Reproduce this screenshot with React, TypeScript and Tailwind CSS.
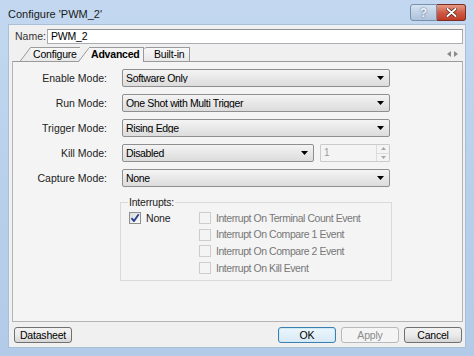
import React from "react";

// ---------- Small helpers ----------
const cx = (...list: (string | boolean | undefined)[]) => list.filter(Boolean).join(" ");

// ---------- Glyphs ----------
const DropArrow = () => (
  <svg width="7" height="4" viewBox="0 0 7 4" className="block shrink-0">
    <path d="M0 0h7L3.5 4z" fill="#000" />
  </svg>
);

const Slant = ({ fill }: { fill: string }) => (
  <svg width="11" height="14" viewBox="0 0 11 14" className="block shrink-0">
    <path d="M0 14L10.2 0.5H11V14z" fill={fill} />
    <path d="M0.3 14L10.5 0.5H11" stroke="#9a9a9a" fill="none" />
  </svg>
);

const CheckMark = () => (
  <svg width="10" height="10" viewBox="0 0 10 10" className="block">
    <path d="M1.5 5.2L4 8L8.7 1.3" stroke="#2a4390" strokeWidth="1.9" fill="none" strokeLinejoin="round" />
  </svg>
);

// ---------- UI atoms ----------
const Select = ({ value, className }: { value: string; className?: string }) => (
  <div
    className={cx(
      "h-[18px] flex items-center pl-[3px] pr-[5px] rounded-[2px] border border-[#8f8f8f] bg-gradient-to-b from-[#f4f4f4] to-[#dcdcdc]",
      className
    )}
  >
    <span className="flex-1 truncate text-[10.5px] tracking-[-0.35px]">{value}</span>
    <DropArrow />
  </div>
);

const Check = ({ checked, disabled }: { checked?: boolean; disabled?: boolean }) => (
  <span
    className={cx(
      "w-[12px] h-[12px] shrink-0 border flex items-center justify-center",
      disabled ? "border-[#cdcdcd] bg-[#f4f4f4]" : "border-[#8f8f8f] bg-gradient-to-br from-[#dadada] to-[#fdfdfd]"
    )}
  >
    {checked && <CheckMark />}
  </span>
);

const Button = ({ children, kind, className }: { children: React.ReactNode; kind?: "default" | "disabled"; className?: string }) => (
  <div
    className={cx(
      "h-[16px] w-[58px] flex items-center justify-center rounded-[3px] border",
      kind === "default" && "border-[#3c7fb1] bg-gradient-to-b from-[#eaf6fd] to-[#d9e9f4] ring-1 ring-inset ring-[#cfe9f7]",
      kind === "disabled" && "border-[#b5b9bc] bg-[#f4f4f4] text-[#8b8b8b]",
      !kind && "border-[#707070] bg-gradient-to-b from-[#f2f2f2] via-[#ebebeb] to-[#d5d5d5]",
      className
    )}
  >
    {children}
  </div>
);

const labels = ["Enable Mode:", "Run Mode:", "Trigger Mode:", "Kill Mode:", "Capture Mode:"];
const interrupts = [
  "Interrupt On Terminal Count Event",
  "Interrupt On Compare 1 Event",
  "Interrupt On Compare 2 Event",
  "Interrupt On Kill Event",
];

export default function App() {
  return (
    <div className="w-[474px] h-[356px] overflow-hidden flex flex-col bg-gradient-to-b from-[#c3d8f0] via-[#b9d0eb] to-[#b3cbe8] font-['Liberation_Sans',Arial,sans-serif] text-[10px] text-black leading-none">
      {/* title bar */}
      <div className="h-[24px] shrink-0 flex pl-[8px] pr-[8px]">
        <span className="text-[11px] self-center mt-[5px] text-[#1a1a1a]">Configure 'PWM_2'</span>
        <div className="ml-auto mt-[4px] flex h-[17px]">
          <div className="w-[27px] h-[17px] rounded-l-[3px] border border-[#7890b0] bg-gradient-to-b from-[#d6e3f1] to-[#aec2da] flex items-center justify-center text-[12px] font-bold text-[#eef3fa] [text-shadow:0_0_2px_#3d5679]">
            ?
          </div>
          <div className="w-[29px] h-[17px] rounded-r-[3px] border border-l-0 border-[#7a2d24] bg-gradient-to-b from-[#e49b87] via-[#cf5a45] to-[#c13b26] flex items-center justify-center">
            <svg width="11" height="9" viewBox="0 0 11 9" className="block">
              <path d="M1.5 1L9.5 8M9.5 1L1.5 8" stroke="#4a1a12" strokeWidth="3.4" strokeLinecap="round" />
              <path d="M1.5 1L9.5 8M9.5 1L1.5 8" stroke="#fff" strokeWidth="2" strokeLinecap="round" />
            </svg>
          </div>
        </div>
      </div>

      {/* client area */}
      <div className="flex-1 mx-[8px] mb-[8px] bg-[#f0f0f0] border border-[#a9bed8] flex flex-col">
        {/* name */}
        <div className="mt-[4px] flex items-center pl-[6px] pr-[2px] text-[10.5px]">
          <span className="w-[32px] text-[#333]">Name:</span>
          <div className="flex-1 h-[15px] flex items-center pl-[3px] bg-white border border-[#abadb3] border-t-[#8e9196] tracking-[-0.2px]">
            PWM_2
          </div>
        </div>

        {/* tabs */}
        <div className="mt-[3px] ml-[3px] mr-[2px] flex items-end h-[14px]">
          <div className="w-[8px] shrink-0" />
          <div className="flex items-end relative">
            <Slant fill="#ececec" />
            <div className="h-[14px] w-[49px] border-t border-[#9a9a9a] bg-gradient-to-b from-[#f8f8f8] to-[#e8e8e8] pl-[2px] flex items-center text-[10.5px] tracking-[-0.2px]">
              Configure
            </div>
          </div>
          <div className="flex items-end relative z-10 -ml-[2px] -mb-[1px]">
            <Slant fill="#f4f4f4" />
            <div className="h-[15px] w-[55px] border-t border-r border-[#9a9a9a] bg-[#f4f4f4] pl-[2px] pb-[1px] flex items-center font-bold text-[10.5px] tracking-[-0.2px]">
              Advanced
            </div>
          </div>
          <div className="h-[14px] w-[46px] border-t border-r border-[#9a9a9a] rounded-tl-[3px] bg-gradient-to-b from-[#f8f8f8] to-[#e8e8e8] pl-[10px] flex items-center text-[10.5px] tracking-[-0.2px]">
            Built-in
          </div>
          <div className="ml-auto mr-[5px] mb-[4px] flex gap-[3px]">
            <svg width="4" height="6" viewBox="0 0 4 6" className="block"><path d="M4 0v6L0 3z" fill="#8a8a8a" /></svg>
            <svg width="4" height="6" viewBox="0 0 4 6" className="block"><path d="M0 0v6l4-3z" fill="#8a8a8a" /></svg>
          </div>
        </div>

        {/* panel */}
        <div className="h-[261px] ml-[3px] mr-[2px] border border-[#b4b4b4] border-t-[#9a9a9a] bg-[#f4f4f4] flex flex-col">
          <div className="mt-[7px] grid grid-cols-[94px_268px] gap-x-[15px] gap-y-[7px] items-center">
            {labels.map((l, i) => (
              <React.Fragment key={l}>
                <span className="text-right text-[#222] text-[10.5px]">{l}</span>
                {i === 0 && <Select value="Software Only" />}
                {i === 1 && <Select value="One Shot with Multi Trigger" />}
                {i === 2 && <Select value="Rising Edge" />}
                {i === 3 && (
                  <div className="flex gap-[6px]">
                    <Select value="Disabled" className="w-[192px]" />
                    <div className="flex-1 h-[18px] flex border border-[#cbcbcb] bg-[#f4f4f4] rounded-[1px]">
                      <span className="flex-1 pl-[3px] flex items-center text-[#9a9a9a]">1</span>
                      <div className="w-[13px] flex flex-col border-l border-[#dcdcdc]">
                        <div className="flex-1 flex items-center justify-center border-b border-[#dcdcdc]">
                          <svg width="5" height="3" viewBox="0 0 5 3" className="block"><path d="M0 3h5L2.5 0z" fill="#a8a8a8" /></svg>
                        </div>
                        <div className="flex-1 flex items-center justify-center">
                          <svg width="5" height="3" viewBox="0 0 5 3" className="block"><path d="M0 0h5L2.5 3z" fill="#a8a8a8" /></svg>
                        </div>
                      </div>
                    </div>
                  </div>
                )}
                {i === 4 && <Select value="None" />}
              </React.Fragment>
            ))}
          </div>

          {/* interrupts group */}
          <fieldset className="mt-[10px] ml-[107px] w-[272px] h-[84px] border border-[#dadada] px-[8px] pb-[4px] pt-0">
            <legend className="text-[#222] px-[1px] -ml-[1px] text-[10.5px] tracking-[-0.2px]">Interrupts:</legend>
            <div className="flex mt-[2px]">
              <div className="w-[70px] h-[17px] flex items-center gap-[5px] self-start">
                <Check checked />
                <span className="text-[#222] text-[10.5px] tracking-[-0.2px]">None</span>
              </div>
              <div className="flex flex-col">
                {interrupts.map((t) => (
                  <div key={t} className="h-[16.7px] flex items-center gap-[5px] text-[#777] text-[10.5px] tracking-[-0.45px]">
                    <Check disabled />
                    <span>{t}</span>
                  </div>
                ))}
              </div>
            </div>
          </fieldset>
        </div>

        {/* buttons */}
        <div className="mt-[5px] flex pl-[5px] pr-[3px] text-[10.5px] tracking-[-0.2px]">
          <Button>Datasheet</Button>
          <div className="ml-auto flex gap-[5px]">
            <Button kind="default">OK</Button>
            <Button kind="disabled">Apply</Button>
            <Button>Cancel</Button>
          </div>
        </div>
      </div>
    </div>
  );
}
